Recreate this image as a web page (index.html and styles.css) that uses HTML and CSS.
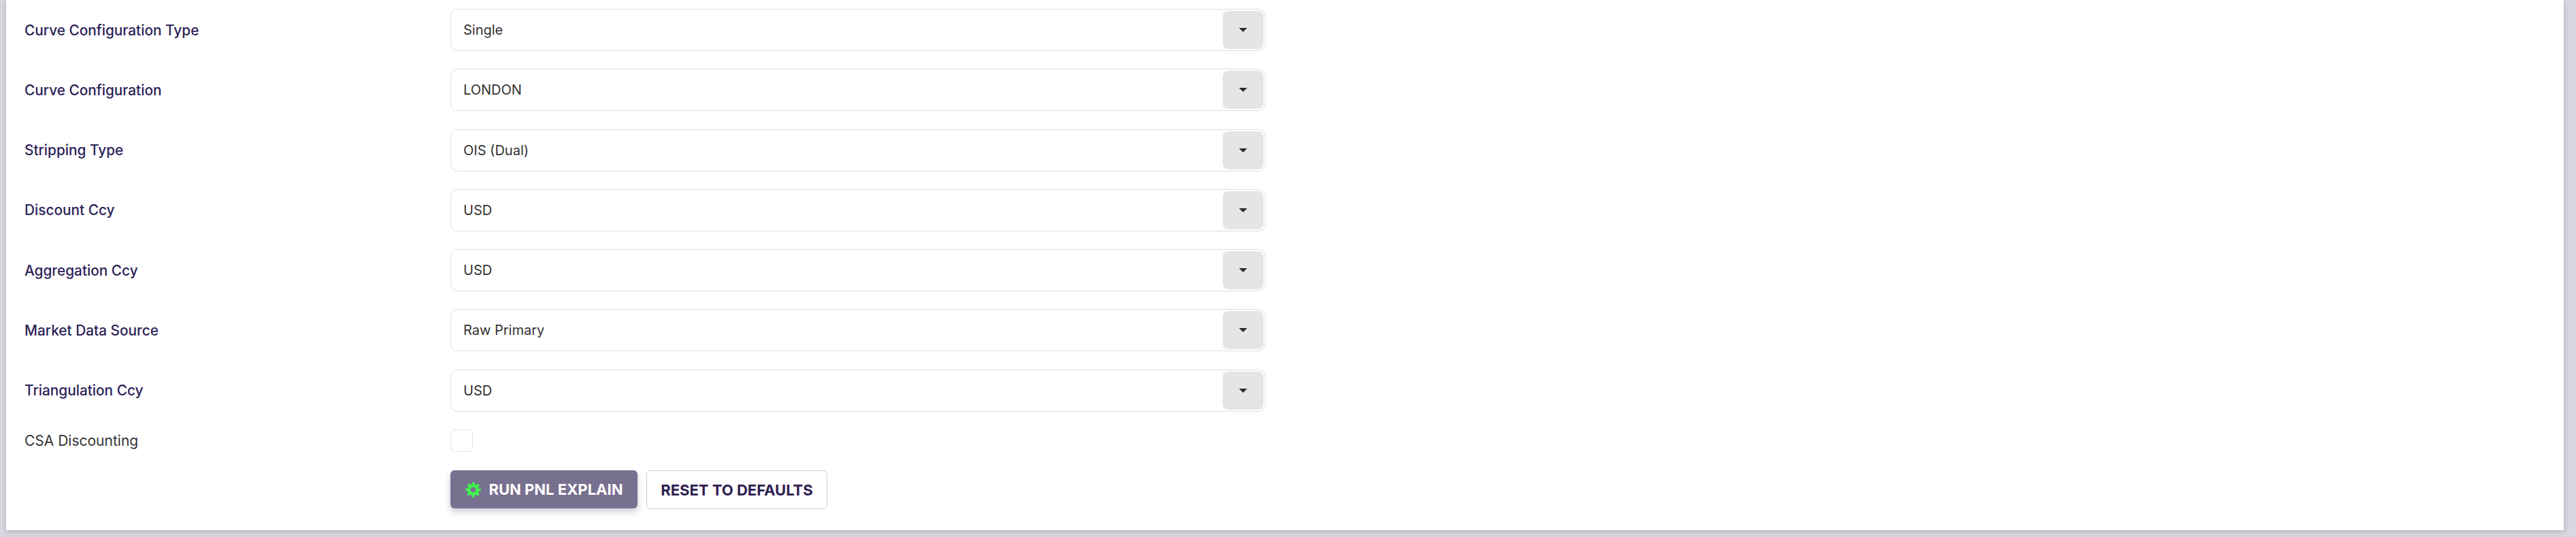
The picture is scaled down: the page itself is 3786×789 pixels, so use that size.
FILE: index.html
```html
<!DOCTYPE html>
<html lang="en">
<head>
  <meta charset="UTF-8">
  <title>PnL Explain</title>
  <link rel="stylesheet" href="styles.css">
</head>
<body>
  <div class="panel">
    <div class="row">
      <label class="field-label">Curve Configuration Type</label>
      <div class="select"><span class="select-value">Single</span><span class="select-btn"><i class="caret"></i></span></div>
    </div>
    <div class="row">
      <label class="field-label">Curve Configuration</label>
      <div class="select"><span class="select-value">LONDON</span><span class="select-btn"><i class="caret"></i></span></div>
    </div>
    <div class="row">
      <label class="field-label">Stripping Type</label>
      <div class="select"><span class="select-value">OIS (Dual)</span><span class="select-btn"><i class="caret"></i></span></div>
    </div>
    <div class="row">
      <label class="field-label">Discount Ccy</label>
      <div class="select"><span class="select-value">USD</span><span class="select-btn"><i class="caret"></i></span></div>
    </div>
    <div class="row">
      <label class="field-label">Aggregation Ccy</label>
      <div class="select"><span class="select-value">USD</span><span class="select-btn"><i class="caret"></i></span></div>
    </div>
    <div class="row">
      <label class="field-label">Market Data Source</label>
      <div class="select"><span class="select-value">Raw Primary</span><span class="select-btn"><i class="caret"></i></span></div>
    </div>
    <div class="row">
      <label class="field-label">Triangulation Ccy</label>
      <div class="select"><span class="select-value">USD</span><span class="select-btn"><i class="caret"></i></span></div>
    </div>
    <div class="row row-check">
      <label class="field-label plain">CSA Discounting</label>
      <span class="checkbox"></span>
    </div>
    <div class="actions">
      <button class="btn btn-primary">
        <svg class="gear" viewBox="0 0 24 24" fill="none" stroke="#43f24f">
          <circle cx="12" cy="12" r="6.500" stroke-width="5"/>
          <circle cx="12" cy="12" r="10" stroke-width="3.500" stroke-dasharray="3.930 3.924" stroke-dashoffset="1.965"/>
        </svg>
        RUN PNL EXPLAIN
      </button>
      <button class="btn btn-default">RESET TO DEFAULTS</button>
    </div>
  </div>
</body>
</html>
```

FILE: styles.css
```css
* { box-sizing: border-box; }
html, body {
  margin: 0;
  padding: 0;
  height: 100%;
  overflow: hidden;
  background: #d9d7df;
  font-family: Inter, sans-serif;
}
.panel {
  margin: 0 18px 0 9px;
  height: 779px;
  padding: 13px 0 0 27px;
  background: white;
  box-shadow: 0 2px 8px rgba(60, 50, 100, 0.25);
}
.row {
  display: flex;
  align-items: center;
  height: 62px;
  margin-bottom: 26.3px;
}
.field-label {
  width: 626px;
  font-size: 20.800px;
  font-weight: 500;
  color: #2c2257;
}
.field-label.plain {
  font-size: 21px;
  font-weight: 400;
  color: #333;
}
.select {
  display: flex;
  align-items: center;
  justify-content: space-between;
  width: 1198px;
  height: 62px;
  padding: 0 2px 0 18px;
  border: 1px solid #dedede;
  border-radius: 10px;
  font-size: 20px;
  color: #333;
}
.select-btn {
  display: flex;
  align-items: center;
  justify-content: center;
  width: 60px;
  height: 56px;
  background: #e5e5e5;
  border-radius: 8px;
}
.caret {
  width: 0;
  height: 0;
  border-top: 6px solid #2b2b2b;
  border-left: 6px solid transparent;
  border-right: 6px solid transparent;
}
.row-check {
  height: 33px;
  margin-bottom: 27px;
}
.checkbox {
  width: 33px;
  height: 33px;
  border: 1px solid #e2e2e2;
  border-radius: 6px;
}
.actions {
  display: flex;
  align-items: flex-start;
  gap: 13px;
  margin-left: 626px;
}
.btn {
  display: flex;
  align-items: center;
  justify-content: center;
  border-radius: 6px;
  font-family: inherit;
  font-size: 22px;
  font-weight: 700;
}
.btn-primary {
  width: 275px;
  height: 56px;
  gap: 12px;
  border: none;
  background: #78708f;
  color: white;
  box-shadow: 0 5px 10px rgba(60, 50, 100, 0.25);
}
.btn-default {
  width: 266px;
  height: 57px;
  background: white;
  border: 1px solid #cfcdd6;
  color: #2e2050;
}
.gear {
  width: 23px;
  height: 23px;
}
```
